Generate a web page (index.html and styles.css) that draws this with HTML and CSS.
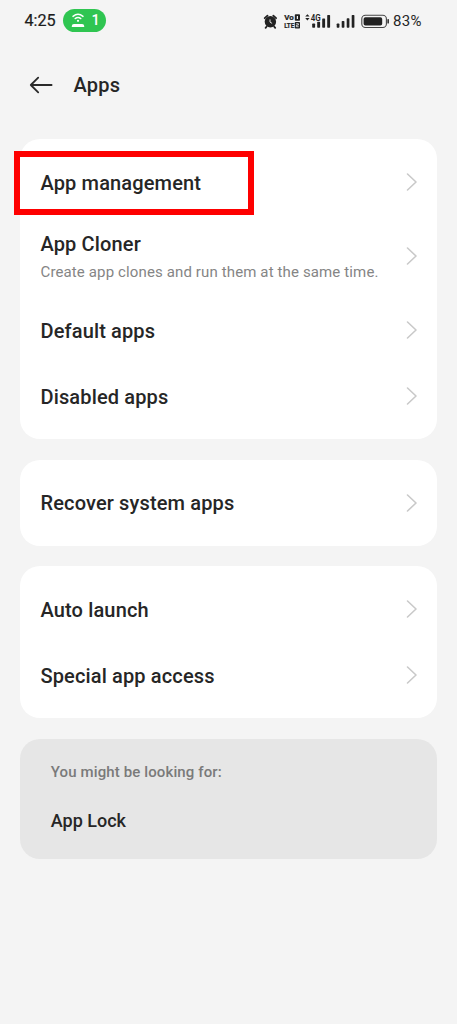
FILE: index.html
```html
<!DOCTYPE html>
<html lang="en">
<head>
<meta charset="utf-8">
<title>Apps</title>
<link rel="stylesheet" href="styles.css">
</head>
<body>
<svg class="defs" aria-hidden="true">
  <symbol id="chevron" viewBox="0 0 12 20"><path d="M1.5 2 L10 10 L1.5 18" fill="none" stroke="currentColor" stroke-width="1.6" stroke-linecap="round" stroke-linejoin="round"/></symbol>
</svg>
<div class="status">
  <span class="clock">4:25</span>
  <span class="hotspot">
    <svg width="14" height="15" viewBox="0 0 14 15" fill="none" stroke="#fff" stroke-width="1.4" stroke-linecap="round"><path d="M2 3.4 Q7 -1 12 3.4 M4.2 5.6 Q7 3.2 9.8 5.6"/><circle cx="7" cy="7.8" r="1.1" fill="#fff" stroke="none"/><path d="M.8 14 V13 Q.8 11 3 11 H11 Q13.2 11 13.2 13 V14 Z" fill="#fff" stroke="none"/></svg>
    <span>1</span>
  </span>
  <svg class="tray" width="128" height="20" viewBox="262 10 128 20" fill="#222">
    <circle cx="270.4" cy="20.8" r="5.7"/>
    <path d="M264.7 17.2l2.8-2.6M276.1 17.2l-2.8-2.6M266.7 25.5l-1.1 1.3M274.1 25.5l1.1 1.3" stroke="#222" stroke-width="1.8" stroke-linecap="round"/>
    <path d="M270 18.4v2.7l2.1 1.3" fill="none" stroke="#f4f4f4" stroke-width=".9"/>
    <text class="tiny" x="284.2" y="19.4" textLength="9.5" lengthAdjust="spacingAndGlyphs">Vo</text>
    <text class="tiny" x="284.2" y="27.4" textLength="10" lengthAdjust="spacingAndGlyphs">LTE</text>
    <rect x="294.8" y="13.2" width="5.2" height="6.6" rx=".8"/><path d="M296.8 15h1.2v3h-1.2z" fill="#f4f4f4"/>
    <rect x="294.8" y="20.9" width="5.2" height="6.6" rx=".8"/><path d="M296.2 22.7h2.2v1.4h-2v1.6h2.3" fill="none" stroke="#f4f4f4" stroke-width=".8"/>
    <path d="M305.2 15.6l2.2-2.4 2.2 2.4zM305.2 17l2.2 2.4 2.2-2.4z"/>
    <text class="net" x="310.8" y="19.9" textLength="10" lengthAdjust="spacingAndGlyphs">4G</text>
    <rect x="312.2" y="22.6" width="2.9" height="4.2" rx=".7"/><rect x="317.2" y="20.8" width="2.9" height="6" rx=".7"/><rect x="322.2" y="17.4" width="2.9" height="9.4" rx=".7"/><rect x="327.2" y="14" width="2.9" height="12.8" rx=".7"/>
    <rect x="336.7" y="22.6" width="2.7" height="4.2" rx=".7"/><rect x="341.7" y="20" width="2.7" height="6.8" rx=".7"/><rect x="346.7" y="17.2" width="2.7" height="9.6" rx=".7"/><rect x="351.7" y="14" width="2.7" height="12.8" rx=".7"/>
    <rect x="361.8" y="14.3" width="24.6" height="12.2" rx="3.6" fill="none" stroke="#444" stroke-width="1.1"/>
    <rect x="363.6" y="16.2" width="18.6" height="8.4" rx="1.8"/><rect x="387.4" y="18" width="1.5" height="4.6" rx=".7"/>
  </svg>
  <span class="percent">83%</span>
</div>
<header class="bar">
  <svg width="24" height="18" viewBox="0 0 24 18" fill="none" stroke="#2a2a2a" stroke-width="1.8" stroke-linecap="round" stroke-linejoin="round"><path d="M22.6 9H1.8M9.2 1.6L1.8 9L9.2 16.4"/></svg>
  <h1 class="title">Apps</h1>
</header>
<main class="cards">
  <section class="card">
    <div class="row"><span class="label">App management</span><svg class="chev"><use href="#chevron"/></svg><div class="highlight"></div></div>
    <div class="row tall"><div><div class="label">App Cloner</div><div class="sub">Create app clones and run them at the same time.</div></div><svg class="chev"><use href="#chevron"/></svg></div>
    <div class="row"><span class="label">Default apps</span><svg class="chev"><use href="#chevron"/></svg></div>
    <div class="row"><span class="label">Disabled apps</span><svg class="chev"><use href="#chevron"/></svg></div>
  </section>
  <section class="card">
    <div class="row"><span class="label">Recover system apps</span><svg class="chev"><use href="#chevron"/></svg></div>
  </section>
  <section class="card">
    <div class="row"><span class="label">Auto launch</span><svg class="chev"><use href="#chevron"/></svg></div>
    <div class="row"><span class="label">Special app access</span><svg class="chev"><use href="#chevron"/></svg></div>
  </section>
  <section class="card suggest">
    <div class="hint">You might be looking for:</div>
    <div class="link">App Lock</div>
  </section>
</main>
</body>
</html>
```
FILE: styles.css
```css
* { box-sizing: border-box; }
body { margin: 0; min-height: 1024px; background: #f4f4f4; color: #262626; font-family: Roboto, sans-serif; }
.defs { display: none; }
.status { display: flex; align-items: center; height: 41px; padding-left: 24.5px; }
.clock { width: 38px; font-size: 16.2px; font-weight: 400; -webkit-text-stroke: .2px; color: #1c1c1c; }
.hotspot { display: flex; align-items: center; gap: 7px; width: 43px; height: 23px; padding-left: 8px; border-radius: 12px; background: #2fc551; color: #fff; font-size: 14.5px; font-weight: 500; }
.tray { margin-left: 156.5px; }
.tiny { font-size: 6.8px; font-weight: 700; stroke: #222; stroke-width: .2px; }
.net { font-size: 9px; font-weight: 600; }
.percent { margin-left: 3px; font-size: 15px; letter-spacing: .3px; }
.bar { display: flex; align-items: center; height: 88px; padding-left: 28.5px; gap: 21px; }
.title { margin: 0; font-size: 20px; font-weight: 500; letter-spacing: .2px; }
.cards { display: flex; flex-direction: column; gap: 20.5px; padding: 10px 20.5px 0 20.3px; }
.card { padding: 10px 18.7px 10px 20.2px; border-radius: 20px; background: #fff; }
.row { position: relative; display: flex; align-items: center; justify-content: space-between; height: 66px; }
.tall { height: 82px; }
.label { font-size: 20px; line-height: 24px; font-weight: 500; letter-spacing: .14px; padding-top: 1px; }
.sub { margin-top: 6px; font-size: 15px; line-height: 20px; letter-spacing: .13px; color: #858585; }
.tall .sub { margin-bottom: -1px; }
.chev { width: 12px; height: 20px; color: #c9c9c9; }
.highlight { position: absolute; left: -26px; top: 2px; width: 240px; height: 64px; border: 6px solid #fe0000; }
.suggest { height: 120.5px; padding: 23px 30.5px; background: #e6e6e6; }
.hint { font-size: 15px; line-height: 20px; font-weight: 500; letter-spacing: .12px; color: #7a7a7a; }
.link { margin-top: 27px; font-size: 18px; line-height: 24px; font-weight: 500; }
```
